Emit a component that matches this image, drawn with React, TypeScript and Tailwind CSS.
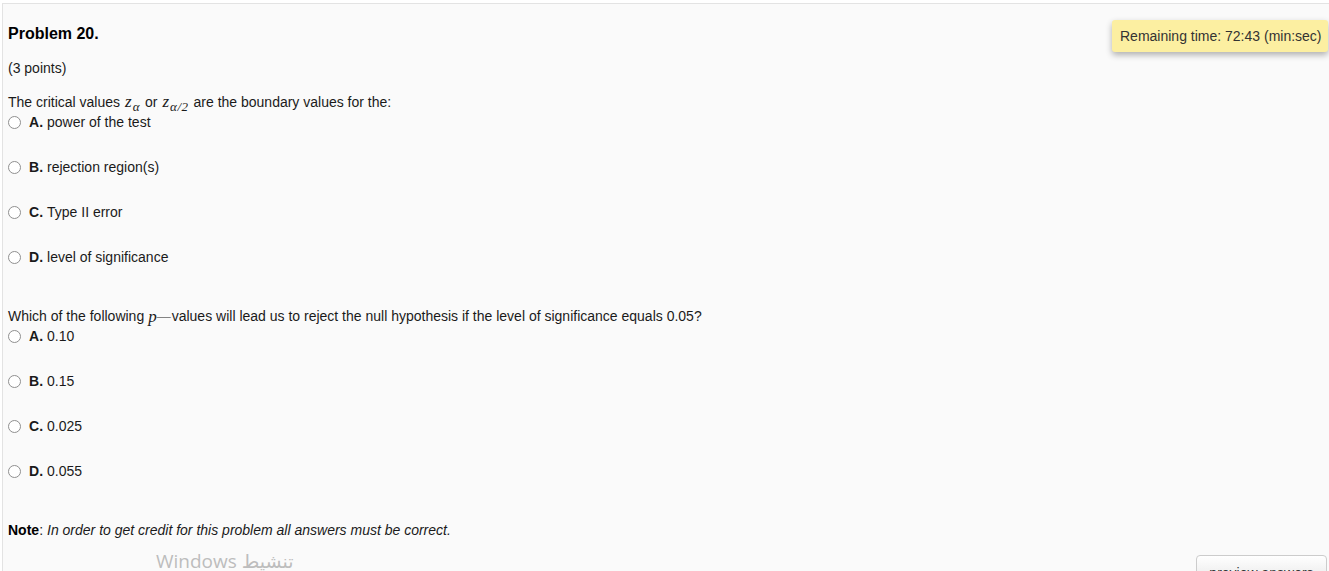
import React from "react";

const sans = { fontFamily: '"Liberation Sans", Arial, sans-serif' };
const serif = { fontFamily: '"Liberation Serif", "Times New Roman", serif' };

function Radio() {
  return (
    <span className="inline-block h-[13px] w-[13px] shrink-0 rounded-full border border-[#8f8f8f] bg-white" />
  );
}

function Option({ letter, text, first }: { letter: string; text: string; first?: boolean }) {
  return (
    <div className={`flex h-[20px] items-center ${first ? "" : "mt-[25px]"}`}>
      <span className="ml-[5px] mr-[8px] flex items-center">
        <Radio />
      </span>
      <b className="font-bold">{letter}.</b>
      <span className="ml-[4px]">{text}</span>
    </div>
  );
}

function MathVar({ base, sub }: { base: string; sub?: string }) {
  return (
    <span className="mx-[5px] italic" style={serif}>
      <span className="text-[17px]">{base}</span>
      {sub && <sub className="ml-[1px] text-[13px] tracking-[0.5px]">{sub}</sub>}
    </span>
  );
}

export default function App() {
  return (
    <div className="relative h-[571px] w-[1329px] overflow-hidden bg-white text-[14px] text-[#1a1a1a]" style={sans}>
      <div className="ml-[2px] mt-[3px] h-[600px] border-l border-t border-[#e3e3e3] bg-[#fafafa] pl-[5px]">
        <div className="pt-[20px]">
          <div className="flex h-[20px] items-center text-[16px] font-bold text-black">Problem 20.</div>
          <div className="mt-[14px] flex h-[20px] items-center">(3 points)</div>
          <div className="mt-[14px] flex h-[20px] items-center">
            The critical values
            <MathVar base="z" sub="α" />
            or
            <MathVar base="z" sub="α/2" />
            are the boundary values for the:
          </div>
          <div className="-ml-[5px]">
            <Option first letter="A" text="power of the test" />
            <Option letter="B" text="rejection region(s)" />
            <Option letter="C" text="Type II error" />
            <Option letter="D" text="level of significance" />
          </div>
          <div className="mt-[40px] flex h-[19px] items-center">
            Which of the following
            <span className="ml-[4px] text-[17px] italic" style={serif}>
              p
            </span>
            <span className="mr-[1px]" style={serif}>
              —
            </span>
            values will lead us to reject the null hypothesis if the level of significance equals 0.05?
          </div>
          <div className="-ml-[5px]">
            <Option first letter="A" text="0.10" />
            <Option letter="B" text="0.15" />
            <Option letter="C" text="0.025" />
            <Option letter="D" text="0.055" />
          </div>
          <div className="mt-[39px] flex h-[20px] items-center">
            <b className="text-black">Note</b>: <i className="ml-[4px]">In order to get credit for this problem all answers must be correct.</i>
          </div>
          <div className="mt-[15px] flex justify-end pr-[2px]">
            <button className="h-[30px] w-[131px] rounded-[4px] border border-[#cccccc] bg-gradient-to-b from-white to-[#e6e6e6] pt-[6px] text-[14px] leading-[20px] text-[#333]">
              preview answers
            </button>
          </div>
        </div>
      </div>

      <div className="absolute right-[1px] top-[20px] flex h-[32px] w-[216px] items-center rounded-[3px] bg-[#fcefa1] pl-[8px] text-[14px] text-[#333] shadow-[0_3px_6px_rgba(0,0,0,0.3)]">
        Remaining time: 72:43 (min:sec)
      </div>

      <div
        className="absolute left-[156px] top-[549px] text-[19px] leading-[24px] text-[#bdbdbd]"
        style={{ fontFamily: '"Open Sans", "DejaVu Sans", sans-serif' }}
      >
        Windows <span style={{ fontFamily: '"DejaVu Sans", sans-serif' }}>تنشيط</span>
      </div>
    </div>
  );
}
